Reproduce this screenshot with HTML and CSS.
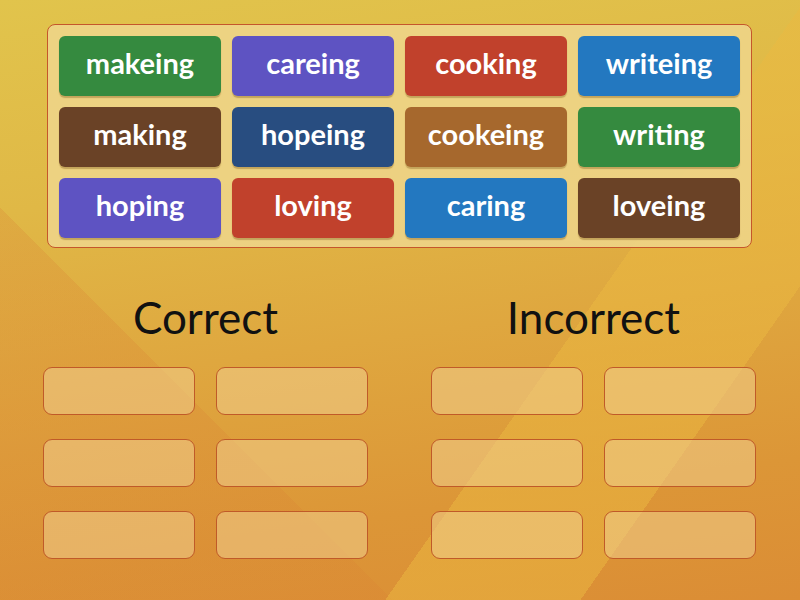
FILE: index.html
```html
<!DOCTYPE html>
<html>
<head>
<meta charset="utf-8">
<link rel="stylesheet" href="styles.css">
</head>
<body>
<div class="page">
  <div class="board">
    <div class="tile green">makeing</div>
    <div class="tile purple">careing</div>
    <div class="tile red">cooking</div>
    <div class="tile blue">writeing</div>
    <div class="tile brown">making</div>
    <div class="tile navy">hopeing</div>
    <div class="tile tan">cookeing</div>
    <div class="tile green">writing</div>
    <div class="tile purple">hoping</div>
    <div class="tile red">loving</div>
    <div class="tile blue">caring</div>
    <div class="tile brown">loveing</div>
  </div>
  <div class="sorting">
    <div class="group">
      <div class="heading">Correct</div>
      <div class="slots">
        <div class="slot"></div><div class="slot"></div>
        <div class="slot"></div><div class="slot"></div>
        <div class="slot"></div><div class="slot"></div>
      </div>
    </div>
    <div class="group">
      <div class="heading">Incorrect</div>
      <div class="slots">
        <div class="slot"></div><div class="slot"></div>
        <div class="slot"></div><div class="slot"></div>
        <div class="slot"></div><div class="slot"></div>
      </div>
    </div>
  </div>
</div>
</body>
</html>
```

FILE: styles.css
```css
html, body {
  margin: 0;
  padding: 0;
  width: 800px;
  height: 600px;
  overflow: hidden;
}
body {
  font-family: "Comic Sans MS", Lato, "DejaVu Sans", sans-serif;
  background:
    linear-gradient(125deg, rgba(240,200,80,0) 0%, rgba(240,200,80,0) 66%, rgba(235,185,65,0.5) 66%, rgba(235,185,65,0.5) 82%, rgba(240,200,80,0) 82%),
    linear-gradient(45deg, rgba(218,130,52,0.25) 0%, rgba(218,130,52,0.25) 28%, rgba(218,130,52,0) 28%),
    linear-gradient(172deg, #e1c44c 0%, #e0b846 30%, #dfa73f 55%, #dc9637 80%, #db8d35 100%);
}
.page {
  padding-top: 24px;
}
.board {
  box-sizing: border-box;
  margin-left: 47px;
  width: 705px;
  height: 224px;
  padding: 11px 11px 9px 11px;
  border: 1.5px solid #c5562b;
  border-radius: 8px;
  background: rgba(238, 214, 140, 0.85);
  display: grid;
  grid-template-columns: repeat(4, 162px);
  grid-template-rows: repeat(3, 60px);
  column-gap: 11px;
  row-gap: 11px;
}
.tile {
  border-radius: 6px;
  color: #fff;
  font-weight: bold;
  font-size: 29px;
  display: flex;
  align-items: center;
  justify-content: center;
  box-shadow: 0 2px 1px rgba(120, 80, 20, 0.35);
  padding-bottom: 7px;
  box-sizing: border-box;
}
.green { background: #358a3f; }
.purple { background: #5e53c2; }
.red { background: #c1412c; }
.blue { background: #2378c0; }
.brown { background: #6a4226; }
.navy { background: #284d80; }
.tan { background: #a6682d; }

.sorting {
  display: flex;
  margin-left: 43px;
  margin-top: 45px;
  gap: 63px;
}
.group {
  width: 325px;
  display: flex;
  flex-direction: column;
}
.heading {
  height: 50px;
  line-height: 48px;
  text-align: center;
  font-size: 44px;
  color: #111;
  margin-bottom: 24px;
}
.slots {
  display: grid;
  grid-template-columns: repeat(2, 152px);
  grid-template-rows: repeat(3, 48px);
  column-gap: 21px;
  row-gap: 24px;
}
.slot {
  box-sizing: border-box;
  border: 1.5px solid #c05a28;
  border-radius: 9px;
  background: rgba(240, 205, 140, 0.55);
}
```
